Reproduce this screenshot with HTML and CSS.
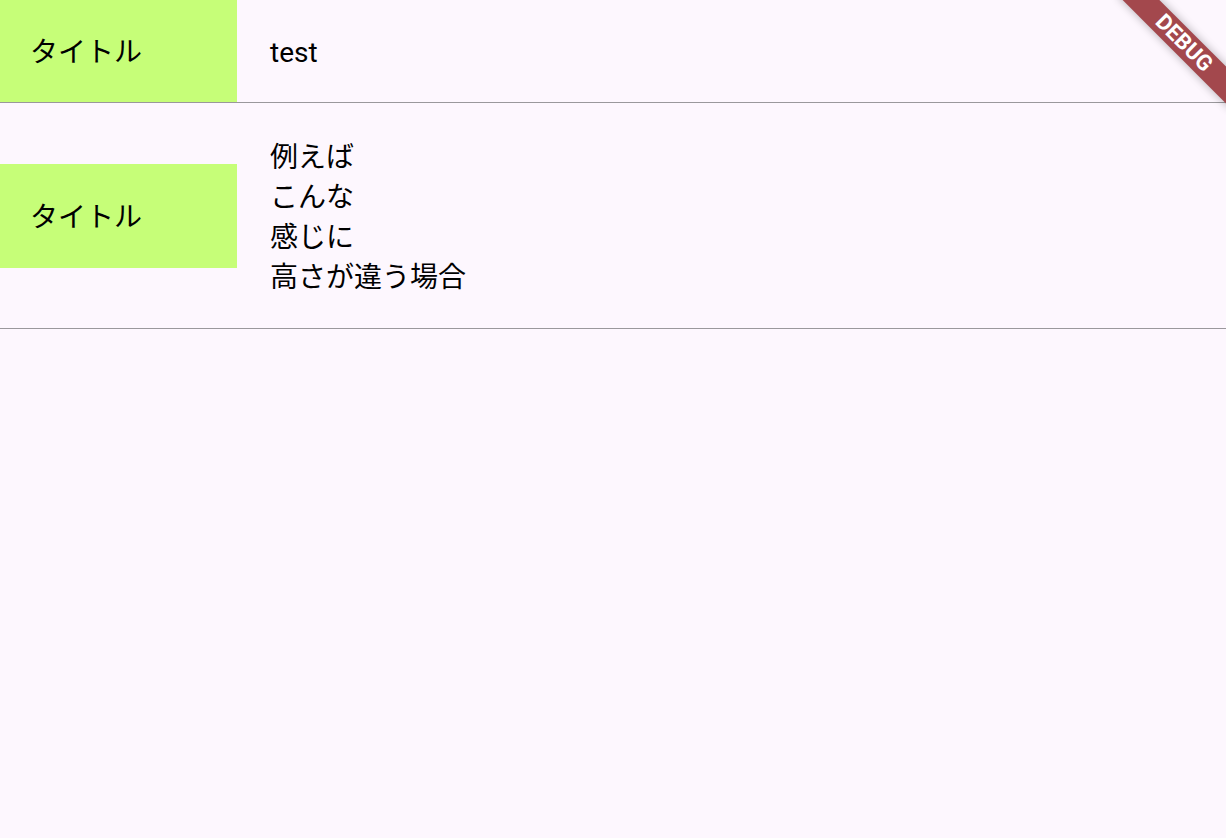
FILE: index.html
```html
<!DOCTYPE html>
<html lang="ja">
<head>
<meta charset="utf-8">
<title>Rows</title>
<link rel="stylesheet" href="styles.css">
</head>
<body>
<div class="list">
  <div class="row row-one">
    <div class="label">タイトル</div>
    <div class="value">test</div>
  </div>
  <div class="row row-two">
    <div class="label label-tall">タイトル</div>
    <div class="value value-multi">例えば<br>こんな<br>感じに<br>高さが違う場合</div>
  </div>
</div>
<div class="banner-clip">
  <div class="banner">DEBUG</div>
</div>
</body>
</html>
```

FILE: styles.css
```css
html, body {
  margin: 0;
  padding: 0;
  background: #fdf7fe;
}
body {
  width: 1226px;
  height: 838px;
  overflow: hidden;
  position: relative;
  font-family: Roboto, "Noto Sans CJK JP", sans-serif;
  font-size: 28px;
  line-height: 40px;
  color: #000;
}
.list {
  display: flex;
  flex-direction: column;
}
.row {
  display: flex;
  border-bottom: 1px solid #9a989c;
}
.row-one {
  height: 102px;
  align-items: stretch;
}
.row-two {
  height: 225px;
  align-items: center;
}
.label {
  width: 237px;
  box-sizing: border-box;
  padding-left: 30px;
  padding-top: 4px;
  background: #c6fe78;
  display: flex;
  align-items: center;
}
.label-tall {
  height: 104px;
}
.value {
  padding-left: 33px;
  padding-top: 4px;
  display: flex;
  align-items: center;
}
.value-multi {
  display: block;
}
.banner-clip {
  position: absolute;
  top: 0;
  right: 0;
  width: 200px;
  height: 200px;
  overflow: hidden;
  pointer-events: none;
}
.banner {
  position: absolute;
  left: 78px;
  top: 30px;
  width: 160px;
  height: 26px;
  transform: rotate(45deg);
  background: #a3484d;
  box-shadow: 0 0 10px rgba(0, 0, 0, 0.3);
  color: #fff;
  font-family: Roboto, sans-serif;
  font-weight: 700;
  font-size: 22px;
  line-height: 26px;
  text-align: center;
}
```
